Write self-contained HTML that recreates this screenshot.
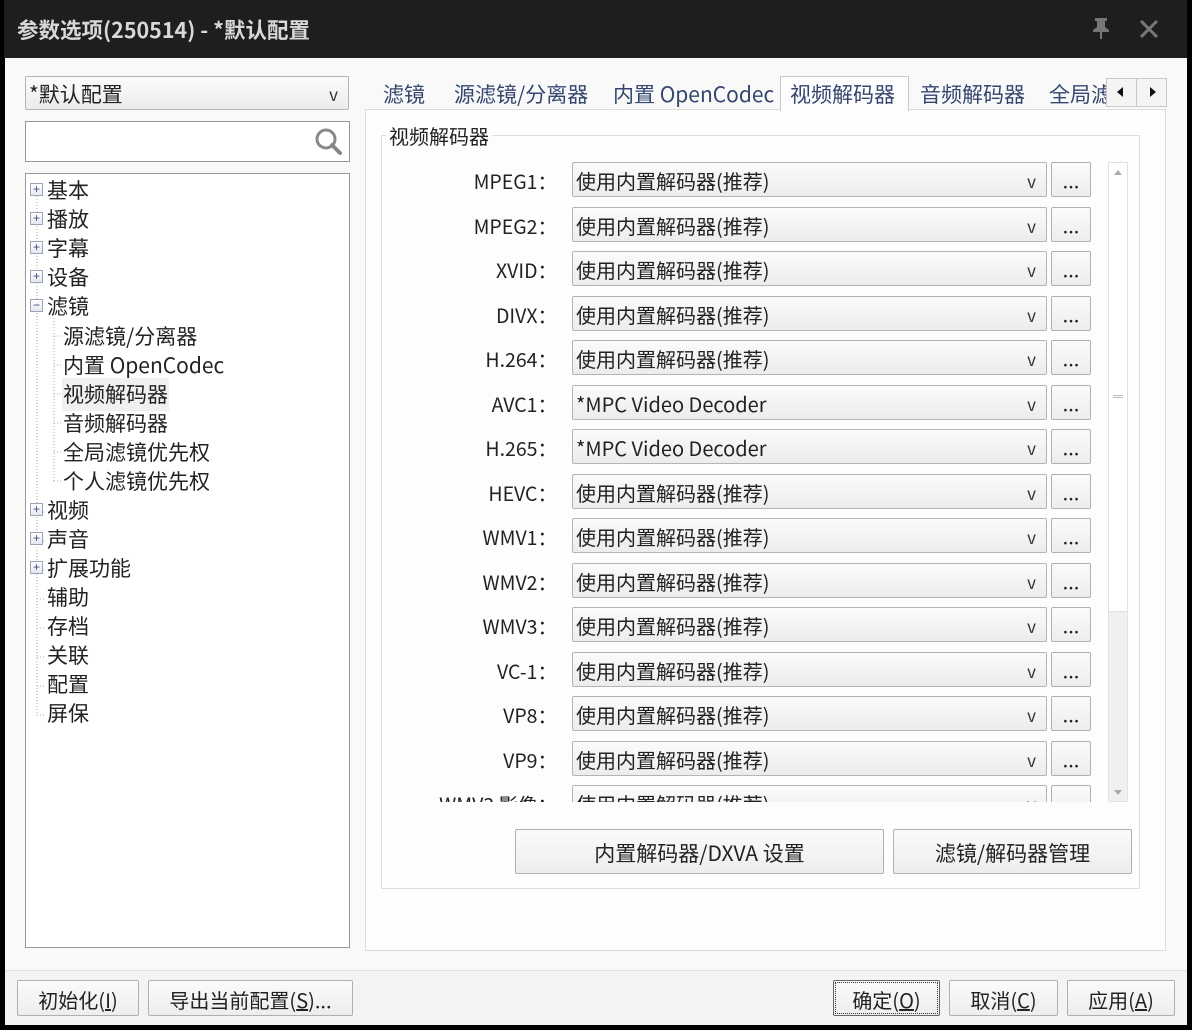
<!DOCTYPE html>
<html><head><meta charset="utf-8"><style>
*{box-sizing:border-box;margin:0;padding:0}
body{width:1192px;height:1030px;background:#000;position:relative;overflow:hidden;font-family:"Noto Sans CJK SC","Liberation Sans",sans-serif;color:#222}
.a{position:absolute}
#title{left:4px;top:0;width:1183px;height:58px;background:#1e1e1e;color:#d8d8d8;font-size:21.5px;font-weight:bold;line-height:60px;padding-left:13px}
#main{left:5px;top:58px;width:1182px;height:912px;background:#f9f9f9}
#foot{left:5px;top:970px;width:1182px;height:55px;background:#f3f3f3;border-top:1px solid #e3e3e3}
.box{position:absolute;background:#fff;border:1px solid #a8a8a8}
.cb{position:absolute;background:linear-gradient(#fbfbfb,#ececec);border:1px solid #b4b4b4;border-radius:2px;font-size:20px;line-height:35px;padding-left:3px;color:#222;white-space:nowrap;overflow:hidden}
.cb .v{position:absolute;right:10px;top:0;font-size:17px;color:#333}
.btn{position:absolute;background:linear-gradient(#fbfbfb,#ededed);border:1px solid #b0b0b0;border-radius:2px;text-align:center;font-size:20px;color:#222}
.ti{position:absolute;font-size:21px;line-height:33px;white-space:nowrap}
.pm{position:absolute;width:13px;height:13px;border:1px solid #9aa5b8;background:linear-gradient(#fff,#e4e8f0);font-size:12px;line-height:11px;text-align:center;color:#3a4d80;font-family:"Liberation Sans",sans-serif}
.tab{position:absolute;top:77px;font-size:21px;color:#34466e;line-height:34px;white-space:nowrap}
.lbl{position:absolute;width:170px;text-align:right;font-size:19.5px;left:387px;line-height:37px}
</style></head><body>
<div id="title" class="a">参数选项(250514) - *默认配置</div>
<svg class="a" style="left:1090px;top:16px" width="22" height="24" viewBox="0 0 22 24"><path d="M5 2h12v3h-2v6l4 3v2H3v-2l4-3V5H5z" fill="#777"/><rect x="10" y="16" width="2" height="7" fill="#777"/></svg>
<svg class="a" style="left:1138px;top:18px" width="22" height="22"><path d="M3 3L19 19M19 3L3 19" stroke="#777" stroke-width="3"/></svg>
<div id="main" class="a"></div>
<div id="foot" class="a"></div>

<div class="cb" style="left:25px;top:76px;width:324px;height:34px;font-size:21px;line-height:34px">*默认配置<span class="v">v</span></div>
<div class="box" style="left:25px;top:121px;width:325px;height:41px;border-color:#999"></div>
<svg class="a" style="left:314px;top:127px" width="30" height="30"><circle cx="12" cy="12" r="9" fill="none" stroke="#888" stroke-width="3"/><path d="M18 18L26 26" stroke="#888" stroke-width="4" stroke-linecap="round"/></svg>

<div class="box" style="left:25px;top:173px;width:325px;height:775px;border-color:#999"></div>
<svg class="a" style="left:25px;top:173px" width="60" height="560"><g stroke="#aaa" stroke-dasharray="1 2" fill="none"><path d="M12 17V541M12 339H20M12 368H20M12 397H20M12 426H20M12 455H20M12 484H20M12 513H20M12 542H20M29 145V308M29 163H37M29 192H37M29 221H37M29 250H37M29 279H37M29 308H37"/></g></svg>
<div class="pm" style="left:30px;top:183px">+</div><div class="ti" style="left:47px;top:174px">基本</div>
<div class="pm" style="left:30px;top:212px">+</div><div class="ti" style="left:47px;top:203px">播放</div>
<div class="pm" style="left:30px;top:241px">+</div><div class="ti" style="left:47px;top:232px">字幕</div>
<div class="pm" style="left:30px;top:270px">+</div><div class="ti" style="left:47px;top:261px">设备</div>
<div class="pm" style="left:30px;top:299px">−</div><div class="ti" style="left:47px;top:290px">滤镜</div>
<div class="ti" style="left:63px;top:320px">源滤镜/分离器</div>
<div class="ti" style="left:63px;top:349px">内置 OpenCodec</div>
<div class="ti" style="left:62px;top:378px;background:#f0f0f0;padding:0 1px">视频解码器</div>
<div class="ti" style="left:63px;top:407px">音频解码器</div>
<div class="ti" style="left:63px;top:436px">全局滤镜优先权</div>
<div class="ti" style="left:63px;top:465px">个人滤镜优先权</div>
<div class="pm" style="left:30px;top:503px">+</div><div class="ti" style="left:47px;top:494px">视频</div>
<div class="pm" style="left:30px;top:532px">+</div><div class="ti" style="left:47px;top:523px">声音</div>
<div class="pm" style="left:30px;top:561px">+</div><div class="ti" style="left:47px;top:552px">扩展功能</div>
<div class="ti" style="left:47px;top:581px">辅助</div>
<div class="ti" style="left:47px;top:610px">存档</div>
<div class="ti" style="left:47px;top:639px">关联</div>
<div class="ti" style="left:47px;top:668px">配置</div>
<div class="ti" style="left:47px;top:697px">屏保</div>

<div class="a" style="left:365px;top:109px;width:801px;height:842px;background:#fdfdfd;border:1px solid #dcdcdc"></div>
<div class="a" style="left:780px;top:76px;width:129px;height:35px;background:#fdfdfd;border:1px solid #c8c8c8;border-bottom:none"></div>
<div class="tab" style="left:383px">滤镜</div>
<div class="tab" style="left:454px">源滤镜/分离器</div>
<div class="tab" style="left:613px">内置 OpenCodec</div>
<div class="tab" style="left:790px">视频解码器</div>
<div class="tab" style="left:920px">音频解码器</div>
<div class="tab" style="left:1049px;width:57px;overflow:hidden">全局滤镜</div>
<div class="a" style="left:1106px;top:78px;width:61px;height:29px;background:#f4f4f4;border:1px solid #c8c8c8"></div>
<div class="a" style="left:1136px;top:78px;width:1px;height:29px;background:#c8c8c8"></div>
<div class="a" style="left:1117px;top:87px;width:0;height:0;border:5px solid transparent;border-right:6px solid #111;border-left:none"></div>
<div class="a" style="left:1150px;top:87px;width:0;height:0;border:5px solid transparent;border-left:6px solid #111;border-right:none"></div>

<div class="a" style="left:381px;top:135px;width:759px;height:754px;border:1px solid #dedede"></div>
<div class="a" style="left:386px;top:120px;font-size:20px;background:#fdfdfd;padding:0 3px;line-height:32px">视频解码器</div>

<div class="a" style="left:380px;top:160px;width:740px;height:642px;overflow:hidden">
<div class="lbl" style="left:7px;top:2px">MPEG1：</div><div class="cb" style="left:192px;top:2px;width:475px;height:35px">使用内置解码器(推荐)<span class="v">v</span></div><div class="btn" style="left:671px;top:2px;width:40px;height:35px;line-height:33px">...</div>
<div class="lbl" style="left:7px;top:47px">MPEG2：</div><div class="cb" style="left:192px;top:47px;width:475px;height:35px">使用内置解码器(推荐)<span class="v">v</span></div><div class="btn" style="left:671px;top:47px;width:40px;height:35px;line-height:33px">...</div>
<div class="lbl" style="left:7px;top:91px">XVID：</div><div class="cb" style="left:192px;top:91px;width:475px;height:35px">使用内置解码器(推荐)<span class="v">v</span></div><div class="btn" style="left:671px;top:91px;width:40px;height:35px;line-height:33px">...</div>
<div class="lbl" style="left:7px;top:136px">DIVX：</div><div class="cb" style="left:192px;top:136px;width:475px;height:35px">使用内置解码器(推荐)<span class="v">v</span></div><div class="btn" style="left:671px;top:136px;width:40px;height:35px;line-height:33px">...</div>
<div class="lbl" style="left:7px;top:180px">H.264：</div><div class="cb" style="left:192px;top:180px;width:475px;height:35px">使用内置解码器(推荐)<span class="v">v</span></div><div class="btn" style="left:671px;top:180px;width:40px;height:35px;line-height:33px">...</div>
<div class="lbl" style="left:7px;top:225px">AVC1：</div><div class="cb" style="left:192px;top:225px;width:475px;height:35px">*MPC Video Decoder<span class="v">v</span></div><div class="btn" style="left:671px;top:225px;width:40px;height:35px;line-height:33px">...</div>
<div class="lbl" style="left:7px;top:269px">H.265：</div><div class="cb" style="left:192px;top:269px;width:475px;height:35px">*MPC Video Decoder<span class="v">v</span></div><div class="btn" style="left:671px;top:269px;width:40px;height:35px;line-height:33px">...</div>
<div class="lbl" style="left:7px;top:314px">HEVC：</div><div class="cb" style="left:192px;top:314px;width:475px;height:35px">使用内置解码器(推荐)<span class="v">v</span></div><div class="btn" style="left:671px;top:314px;width:40px;height:35px;line-height:33px">...</div>
<div class="lbl" style="left:7px;top:358px">WMV1：</div><div class="cb" style="left:192px;top:358px;width:475px;height:35px">使用内置解码器(推荐)<span class="v">v</span></div><div class="btn" style="left:671px;top:358px;width:40px;height:35px;line-height:33px">...</div>
<div class="lbl" style="left:7px;top:403px">WMV2：</div><div class="cb" style="left:192px;top:403px;width:475px;height:35px">使用内置解码器(推荐)<span class="v">v</span></div><div class="btn" style="left:671px;top:403px;width:40px;height:35px;line-height:33px">...</div>
<div class="lbl" style="left:7px;top:447px">WMV3：</div><div class="cb" style="left:192px;top:447px;width:475px;height:35px">使用内置解码器(推荐)<span class="v">v</span></div><div class="btn" style="left:671px;top:447px;width:40px;height:35px;line-height:33px">...</div>
<div class="lbl" style="left:7px;top:492px">VC-1：</div><div class="cb" style="left:192px;top:492px;width:475px;height:35px">使用内置解码器(推荐)<span class="v">v</span></div><div class="btn" style="left:671px;top:492px;width:40px;height:35px;line-height:33px">...</div>
<div class="lbl" style="left:7px;top:536px">VP8：</div><div class="cb" style="left:192px;top:536px;width:475px;height:35px">使用内置解码器(推荐)<span class="v">v</span></div><div class="btn" style="left:671px;top:536px;width:40px;height:35px;line-height:33px">...</div>
<div class="lbl" style="left:7px;top:581px">VP9：</div><div class="cb" style="left:192px;top:581px;width:475px;height:35px">使用内置解码器(推荐)<span class="v">v</span></div><div class="btn" style="left:671px;top:581px;width:40px;height:35px;line-height:33px">...</div>
<div class="lbl" style="left:7px;top:625px">WMV3 影像：</div><div class="cb" style="left:192px;top:625px;width:475px;height:35px">使用内置解码器(推荐)<span class="v">v</span></div><div class="btn" style="left:671px;top:625px;width:40px;height:35px;line-height:33px">...</div>
</div>

<div class="a" style="left:1108px;top:162px;width:20px;height:640px;background:#f0f0f0;border:1px solid #e4e4e4"></div>
<div class="a" style="left:1108px;top:162px;width:20px;height:450px;background:#fff;border:1px solid #e0e0e0"></div>
<div class="a" style="left:1114px;top:170px;border:4px solid transparent;border-bottom:5px solid #aaa;border-top:none"></div>
<div class="a" style="left:1114px;top:790px;border:4px solid transparent;border-top:5px solid #aaa;border-bottom:none"></div>
<div class="a" style="left:1113px;top:395px;width:10px;height:3px;border-top:1px solid #bbb;border-bottom:1px solid #bbb"></div>

<div class="btn" style="left:515px;top:829px;width:369px;height:45px;line-height:46px;font-size:21px">内置解码器/DXVA 设置</div>
<div class="btn" style="left:893px;top:829px;width:239px;height:45px;line-height:46px;font-size:21px">滤镜/解码器管理</div>

<div class="btn" style="left:17px;top:980px;width:122px;height:36px;line-height:38px">初始化(<u>I</u>)</div>
<div class="btn" style="left:148px;top:980px;width:205px;height:36px;line-height:38px">导出当前配置(<u>S</u>)...</div>
<div class="btn" style="left:833px;top:980px;width:107px;height:36px;line-height:38px;border-color:#666;outline:1px dotted #333;outline-offset:-3px">确定(<u>O</u>)</div>
<div class="btn" style="left:949px;top:980px;width:109px;height:36px;line-height:38px">取消(<u>C</u>)</div>
<div class="btn" style="left:1067px;top:980px;width:108px;height:36px;line-height:38px">应用(<u>A</u>)</div>
</body></html>
